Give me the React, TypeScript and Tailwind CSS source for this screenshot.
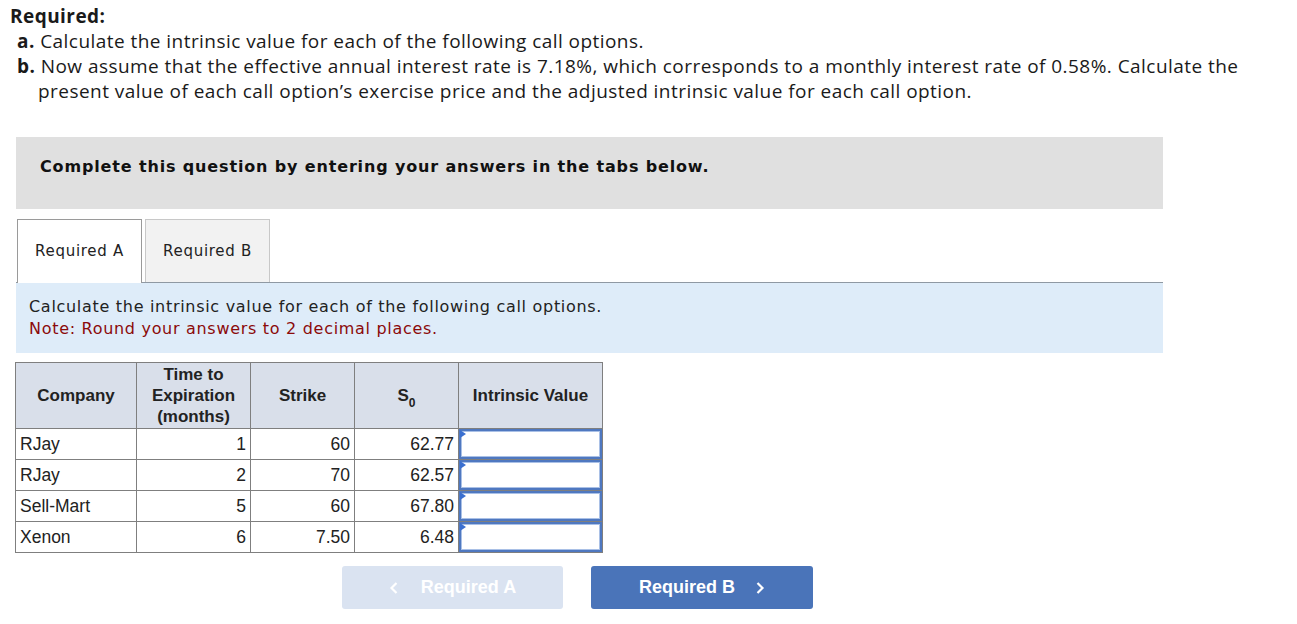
import React from "react";

const ROWS = [
  { company: "RJay", time: "1", strike: "60", s0: "62.77" },
  { company: "RJay", time: "2", strike: "70", s0: "62.57" },
  { company: "Sell-Mart", time: "5", strike: "60", s0: "67.80" },
  { company: "Xenon", time: "6", strike: "7.50", s0: "6.48" },
];

function AnswerCell() {
  return (
    <td className="relative h-[31px] w-[144px] border border-[#7f7f7f] p-0">
      <div className="absolute inset-0 border-2 border-[#4f78c0] bg-white">
        <div className="h-full w-full border border-[#a9c0e6]" />
      </div>
      <span className="absolute left-[1px] top-[1px] h-0 w-0 border-y-[4px] border-l-[6px] border-y-transparent border-l-[#3a6fd0]" />
    </td>
  );
}

export default function App() {
  return (
    <div className="min-h-screen bg-white text-[#222]">
      {/* Instructions */}
      <div className="pl-[10px] pt-[4px] font-['Open_Sans',sans-serif] text-[19px] leading-[25px] tracking-[0.45px] text-[#1a1a1a]">
        <div className="font-bold">Required:</div>
        <div className="pl-[7px]">
          <span className="font-bold">a.</span> Calculate the intrinsic value for each of the following call options.
        </div>
        <div className="pl-[7px]">
          <span className="font-bold">b.</span> Now assume that the effective annual interest rate is 7.18%, which corresponds to a monthly interest rate of 0.58%. Calculate the
        </div>
        <div className="pl-[28px]">present value of each call option’s exercise price and the adjusted intrinsic value for each call option.</div>
      </div>

      <div className="ml-[16px] w-[1147px] pt-[33px]">
        {/* Gray banner */}
        <div className="flex h-[72px] items-center bg-[#e0e0e0] pb-[12px] pl-[24px] font-['DejaVu_Sans',Verdana,sans-serif] text-[16px] font-bold tracking-[0.85px] text-[#111]">
          Complete this question by entering your answers in the tabs below.
        </div>

        {/* Tabs */}
        <div className="mt-[10px] flex items-end border-b border-[#8f99a3] font-['DejaVu_Sans',Verdana,sans-serif] text-[15px] tracking-[0.7px] text-[#222]">
          <div className="relative -mb-px ml-px flex h-[64px] w-[125px] items-center justify-center border border-b-0 border-[#9a9a9a] bg-white">
            Required A
          </div>
          <div className="ml-[3px] flex h-[63px] w-[125px] items-center justify-center border border-b-0 border-[#c8c8c8] bg-[#f2f2f2]">
            Required B
          </div>
        </div>

        {/* Note */}
        <div className="flex h-[70px] flex-col justify-center bg-[#deecf9] pl-[13px] font-['DejaVu_Sans',Verdana,sans-serif] text-[16px] leading-[22px] tracking-[0.7px]">
          <div className="text-[#222]">Calculate the intrinsic value for each of the following call options.</div>
          <div className="text-[#8b0a0a]">Note: Round your answers to 2 decimal places.</div>
        </div>
      </div>

      {/* Table */}
      <table className="ml-[15px] mt-[9px] border-collapse font-['Liberation_Sans',Arial,sans-serif] text-[17.5px] text-[#222]">
        <thead>
          <tr className="bg-[#d9dfea]">
            <th className="h-[66px] w-[121px] border border-[#7f7f7f] text-[17px] font-bold leading-[21px]">Company</th>
            <th className="w-[114px] border border-[#7f7f7f] text-[17px] font-bold leading-[21px]">
              Time to
              <br />
              Expiration
              <br />
              (months)
            </th>
            <th className="w-[104px] border border-[#7f7f7f] text-[17px] font-bold">Strike</th>
            <th className="w-[104px] border border-[#7f7f7f] text-[17px] font-bold">
              S<sub className="text-[12px] align-[-3px]">0</sub>
            </th>
            <th className="w-[144px] border border-[#7f7f7f] text-[17px] font-bold">Intrinsic Value</th>
          </tr>
        </thead>
        <tbody>
          {ROWS.map((r, i) => (
            <tr key={i}>
              <td className="h-[31px] border border-[#7f7f7f] px-[4px] py-0 text-left leading-[20px]">{r.company}</td>
              <td className="border border-[#7f7f7f] px-[4px] py-0 text-right leading-[20px]">{r.time}</td>
              <td className="border border-[#7f7f7f] px-[4px] py-0 text-right leading-[20px]">{r.strike}</td>
              <td className="border border-[#7f7f7f] px-[4px] py-0 text-right leading-[20px]">{r.s0}</td>
              <AnswerCell />
            </tr>
          ))}
        </tbody>
      </table>

      {/* Nav buttons */}
      <div className="ml-[342px] mt-[13px] flex gap-[28px] font-['Liberation_Sans',Arial,sans-serif] text-[18px] font-bold text-white">
        <button className="flex h-[43px] w-[221px] items-center justify-center gap-[22px] rounded-[3px] bg-[#dae3f1]">
          <svg width="10" height="14" viewBox="0 0 10 14" fill="none" stroke="white" strokeWidth="2.2">
            <path d="M7.5 2 L2.5 7 L7.5 12" />
          </svg>
          <span>Required A</span>
        </button>
        <button className="flex h-[43px] w-[222px] items-center justify-center gap-[20px] rounded-[3px] bg-[#4a74b9]">
          <span>Required B</span>
          <svg width="10" height="14" viewBox="0 0 10 14" fill="none" stroke="white" strokeWidth="2.2">
            <path d="M2.5 2 L7.5 7 L2.5 12" />
          </svg>
        </button>
      </div>
    </div>
  );
}
